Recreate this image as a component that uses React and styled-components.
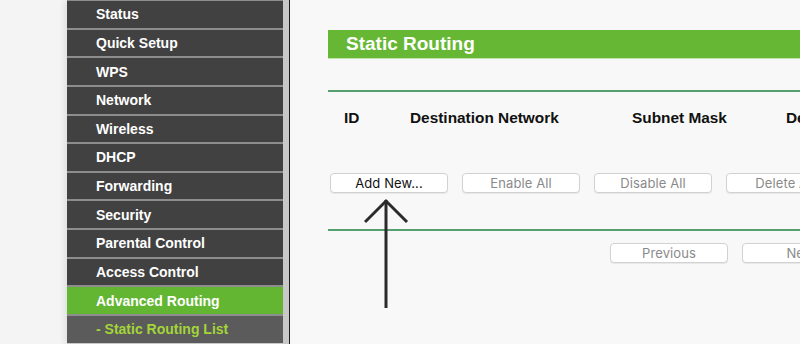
import React from 'react';
import styled, { createGlobalStyle } from 'styled-components';

const GlobalStyle = createGlobalStyle`
  html, body {
    margin: 0;
    padding: 0;
    background: #f7f7f7;
    overflow: hidden;
  }
`;

const Page = styled.div`
  display: flex;
  width: 800px;
  height: 344px;
  overflow: hidden;
  font-family: "Liberation Sans", Arial, sans-serif;
`;

const Gutter = styled.div`
  width: 67px;
  flex-shrink: 0;
  background: #f4f4f4;
`;

const Sidebar = styled.nav`
  display: flex;
  flex-shrink: 0;
  background: #c8c8c8;
  padding-right: 6px;
  border-right: 1.5px solid #1c1c1c;
  box-shadow: -3px 0 6px rgba(0, 0, 0, 0.08);
`;

const Menu = styled.ul`
  list-style: none;
  margin: -1px 0 0;
  padding: 0;
  width: 216px;
`;

const MenuItem = styled.li`
  box-sizing: border-box;
  height: 28.64px;
  border-top: 2px solid #8d8d8d;
  display: flex;
  align-items: center;
  padding-left: 29px;
  font-size: 14px;
  font-weight: bold;
  color: ${p => (p.$sub ? '#a3d53a' : '#ffffff')};
  background: ${p => (p.$active ? '#63b632' : p.$sub ? '#5b5b5b' : '#414141')};
`;

const Main = styled.main`
  position: relative;
  flex: 1;
  min-width: 0;
  padding: 30px 0 0 38px;
  background: #f8f8f8;
  overflow: hidden;
`;

const TitleBar = styled.div`
  height: 28px;
  background: #66b834;
  border-bottom: 1px solid #bfe3a8;
  display: flex;
  align-items: center;
  padding-left: 18px;
  color: #fff;
  font-size: 19px;
  font-weight: bold;
  white-space: nowrap;
`;

const Rule = styled.div`
  height: 2px;
  background: #55a06f;
  margin-top: ${p => p.$top}px;
  width: 600px;
`;

const HeadRow = styled.div`
  display: flex;
  align-items: center;
  height: 52px;
  padding-left: 16px;
  white-space: nowrap;
  font-size: 15.4px;
  font-weight: bold;
  color: #111;
`;

const HeadCell = styled.div`
  flex-shrink: 0;
  width: ${p => p.$w}px;
`;

const ButtonRow = styled.div`
  display: flex;
  gap: 14px;
  margin-top: ${p => p.$top}px;
  padding-left: ${p => p.$left}px;
  white-space: nowrap;
`;

const Button = styled.button`
  flex-shrink: 0;
  box-sizing: border-box;
  width: 118px;
  height: 20px;
  padding: 0;
  background: #ffffff;
  border: 1px solid #d2d2d2;
  border-radius: 4px;
  box-shadow: 0 1px 1px rgba(0, 0, 0, 0.07);
  font-family: Inter, "Liberation Sans", Arial, sans-serif;
  font-size: 13px;
  letter-spacing: 0.1px;
  color: ${p => (p.$primary ? '#111' : '#8a8a8a')};
`;

const Arrow = styled.svg`
  position: absolute;
  left: 74px;
  top: 198px;
`;

const menu = [
  'Status',
  'Quick Setup',
  'WPS',
  'Network',
  'Wireless',
  'DHCP',
  'Forwarding',
  'Security',
  'Parental Control',
  'Access Control',
];

const App = () => (
  <>
    <GlobalStyle />
    <Page>
      <Gutter />
      <Sidebar>
        <Menu>
          {menu.map(m => (
            <MenuItem key={m}>{m}</MenuItem>
          ))}
          <MenuItem $active>Advanced Routing</MenuItem>
          <MenuItem $sub>- Static Routing List</MenuItem>
        </Menu>
      </Sidebar>
      <Main>
        <TitleBar>Static Routing</TitleBar>
        <Rule $top={31} />
        <HeadRow>
          <HeadCell $w={66}>ID</HeadCell>
          <HeadCell $w={222}>Destination Network</HeadCell>
          <HeadCell $w={154}>Subnet Mask</HeadCell>
          <HeadCell $w={200}>Default Gateway</HeadCell>
        </HeadRow>
        <ButtonRow $top={29} $left={2}>
          <Button $primary>Add New...</Button>
          <Button>Enable All</Button>
          <Button>Disable All</Button>
          <Button>Delete All</Button>
        </ButtonRow>
        <Rule $top={36} />
        <ButtonRow $top={12} $left={282}>
          <Button>Previous</Button>
          <Button>Next</Button>
        </ButtonRow>
        <Arrow width="46" height="112" viewBox="0 0 46 112">
          <g stroke="#2b2b2b" strokeWidth="3" fill="none">
            <line x1="22" y1="2" x2="22" y2="110" />
            <polyline points="1,24 22,3 43,24" />
          </g>
        </Arrow>
      </Main>
    </Page>
  </>
);

export default App;
